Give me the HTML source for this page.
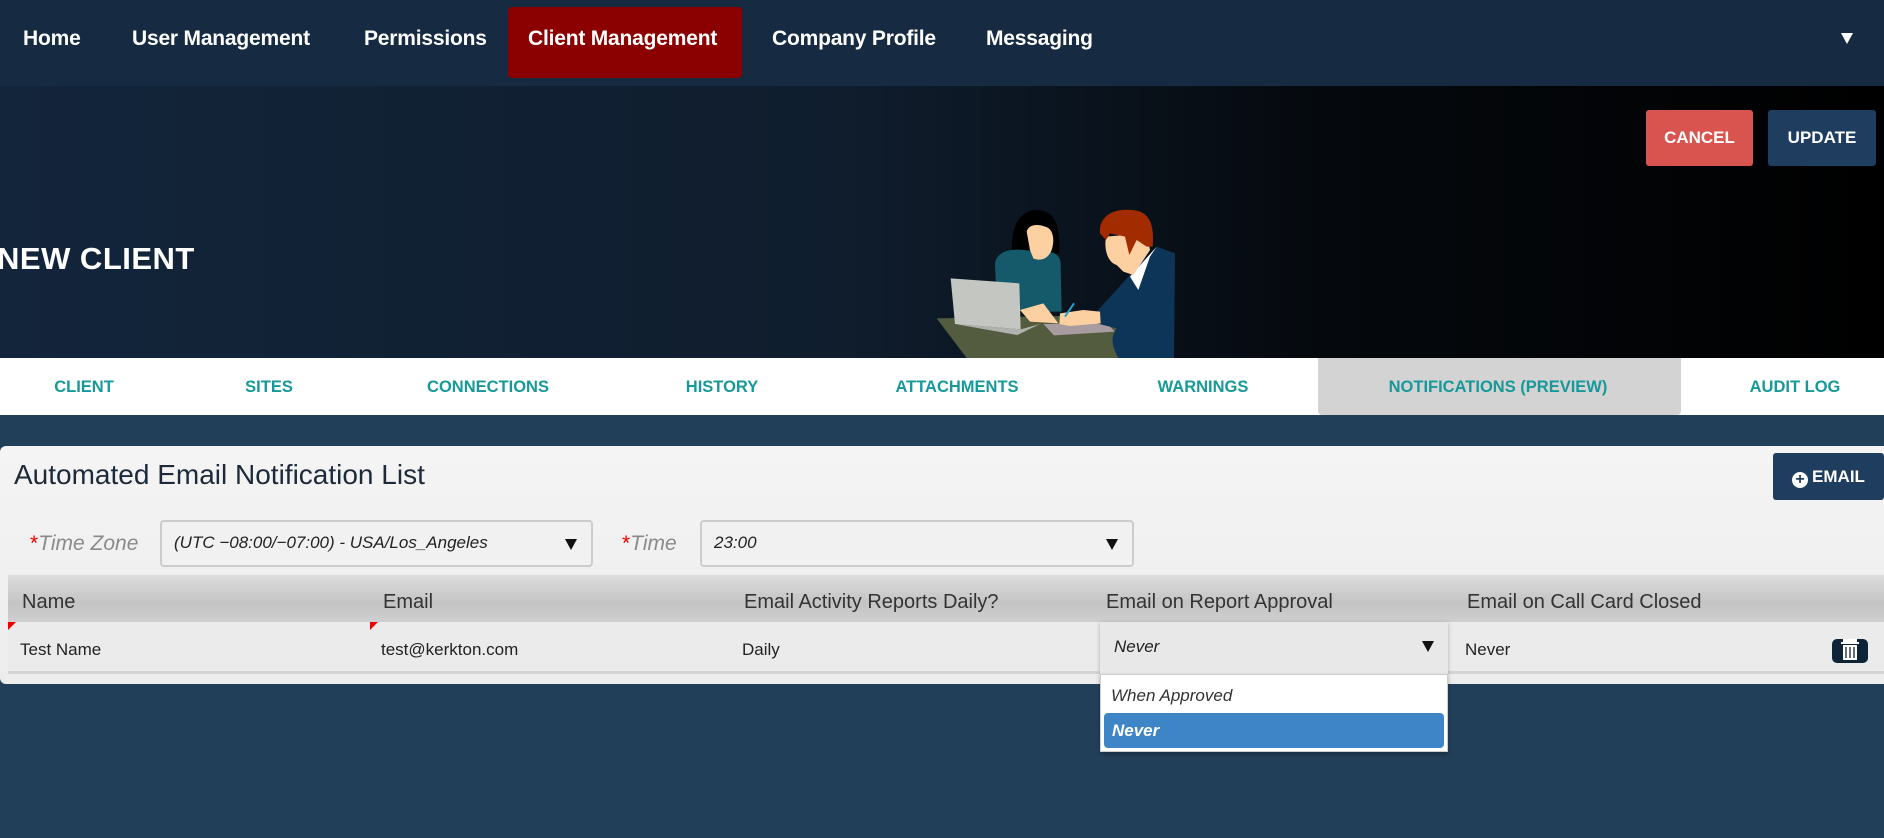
<!DOCTYPE html>
<html><head><meta charset="utf-8">
<style>
*{box-sizing:border-box;margin:0;padding:0}
body{width:1884px;height:838px;overflow:hidden;background:#223f59;font-family:"Liberation Sans",sans-serif;position:relative}
.abs{position:absolute}
.nav{left:0;top:0;width:1884px;height:86px;background:#162a42}
.nav span{position:absolute;top:27px;color:#fff;font-weight:bold;font-size:21px;letter-spacing:-0.2px}
.hero{left:0;top:86px;width:1884px;height:272px;background:linear-gradient(90deg,#13253b 0%,#0f1d2d 45%,#05090e 70%,#000 100%)}
.btn{color:#fff;font-weight:bold;font-size:17px;text-align:center;border-radius:3px}
.tabs{left:0;top:358px;width:1884px;height:57px;background:#fff}
.tabs span{position:absolute;top:20px;color:#17989a;font-weight:bold;font-size:16.5px;transform:translateX(-50%);white-space:nowrap}
.panel{left:0;top:446px;width:1884px;height:238px;background:linear-gradient(180deg,#f4f4f4,#ededed);border-radius:6px 0 0 6px}
.lbl{color:#8a8a8a;font-style:italic;font-size:21px}
.req{color:#e00;font-style:normal}
.sel{border:2px solid #ccc;border-radius:4px;background:#f1f1f1;font-style:italic;font-size:17px;color:#222;padding:11px 12px}
.tri{position:absolute;right:14px;top:17px;width:0;height:0;border-left:6px solid transparent;border-right:6px solid transparent;border-top:11px solid #111}
.th{top:575px;height:47px;background:linear-gradient(180deg,#dcdcdc,#c4c4c4 60%,#cfcfcf);left:8px;width:1876px}
.th span{position:absolute;top:16px;font-size:20px;color:#333}
.row{top:622px;height:52px;left:8px;width:1876px;background:#ebebeb;border-bottom:3px solid #d4d4d4}
.row span{position:absolute;top:18px;font-size:17px;color:#222}
</style></head><body>
<div class="abs nav">
<span style="left:23px">Home</span>
<span style="left:132px">User Management</span>
<span style="left:364px">Permissions</span>
<div class="abs" style="left:508px;top:7px;width:234px;height:71px;background:#8b0000;border-radius:4px"></div>
<span style="left:528px">Client Management</span>
<span style="left:772px">Company Profile</span>
<span style="left:986px">Messaging</span>
<div class="abs" style="left:1841px;top:33px;width:0;height:0;border-left:6px solid transparent;border-right:6px solid transparent;border-top:11px solid #fff"></div>
</div>
<div class="abs hero">
<div class="abs" style="left:-3px;top:155px;color:#fff;font-size:31px;font-weight:bold;letter-spacing:0.5px">NEW CLIENT</div>
<div class="abs btn" style="left:1646px;top:24px;width:107px;height:56px;line-height:56px;background:#d9534f">CANCEL</div>
<div class="abs btn" style="left:1768px;top:24px;width:108px;height:56px;line-height:56px;background:#1f3d5f">UPDATE</div>
</div>
<svg class="abs" style="left:930px;top:200px" width="260" height="158" viewBox="0 0 780 474">
<polygon points="20,355 560,345 600,474 110,474" fill="#545c40"/>
<path d="M245,150 C245,60 280,30 320,30 C370,30 392,70 388,160 L300,170 Z" fill="#000"/>
<path d="M195,190 C200,160 230,145 280,150 L330,155 C370,150 395,165 392,200 L395,335 L280,335 L200,300 Z" fill="#155a6a"/>
<path d="M290,95 C295,75 320,70 345,80 C370,85 375,120 365,150 C355,175 335,185 310,175 L300,150 Z" fill="#fcd0a0"/>
<polygon points="62,235 268,250 272,388 75,372" fill="#c4c6c2"/>
<polygon points="75,372 272,388 330,372 262,405" fill="#b0b2ae"/>
<polygon points="340,372 530,370 555,395 372,406" fill="#a89ca0"/>
<path d="M270,330 L340,310 L385,370 L300,365 Z" fill="#fcd0a0"/>
<path d="M600,225 L680,140 L735,160 L732,474 L565,474 C540,430 545,405 560,385 L500,370 L500,335 Z" fill="#0d3558"/>
<path d="M600,230 L680,140 L660,170 L625,270 Z" fill="#fff"/>
<path d="M528,110 C520,160 540,190 560,195 L580,215 L610,225 L660,150 L650,100 Z" fill="#fcd0a0"/>
<path d="M510,100 C505,50 550,25 600,30 C650,30 675,60 668,140 L650,140 L620,120 L598,165 L585,110 L540,100 L528,120 Z" fill="#a32b00"/>
<path d="M390,340 L460,330 L510,335 L512,370 L420,378 L388,372 Z" fill="#fcd0a0"/>
<line x1="405" y1="350" x2="432" y2="310" stroke="#2aa0d0" stroke-width="6"/>
</svg>
<div class="abs tabs">
<div class="abs" style="left:1318px;top:0;width:363px;height:57px;background:#d3d3d3;border-radius:0 0 4px 4px"></div>
<span style="left:84px">CLIENT</span>
<span style="left:269px">SITES</span>
<span style="left:488px">CONNECTIONS</span>
<span style="left:722px">HISTORY</span>
<span style="left:957px">ATTACHMENTS</span>
<span style="left:1203px">WARNINGS</span>
<span style="left:1498px">NOTIFICATIONS (PREVIEW)</span>
<span style="left:1795px">AUDIT LOG</span>
</div>
<div class="abs panel"></div>
<div class="abs" style="left:14px;top:459px;font-size:28px;color:#1c2a3a">Automated Email Notification List</div>
<div class="abs btn" style="left:1773px;top:453px;width:111px;height:47px;line-height:47px;background:#1f3d5f;font-size:17px"><span style="display:inline-block;width:16px;height:16px;border-radius:50%;background:#fff;color:#1f3d5f;font-size:16px;line-height:16px;vertical-align:-2px;margin-right:4px">+</span>EMAIL</div>
<div class="abs lbl" style="left:30px;top:532px"><span class="req">*</span>Time Zone</div>
<div class="abs sel" style="left:160px;top:520px;width:433px;height:47px">(UTC −08:00/−07:00) - USA/Los_Angeles<div class="tri"></div></div>
<div class="abs lbl" style="left:622px;top:532px"><span class="req">*</span>Time</div>
<div class="abs sel" style="left:700px;top:520px;width:434px;height:47px">23:00<div class="tri"></div></div>
<div class="abs th">
<span style="left:14px">Name</span><span style="left:375px">Email</span><span style="left:736px">Email Activity Reports Daily?</span><span style="left:1098px">Email on Report Approval</span><span style="left:1459px">Email on Call Card Closed</span>
</div>
<div class="abs row">
<div class="abs" style="left:0;top:0;border-top:8px solid #e00;border-right:8px solid transparent"></div>
<div class="abs" style="left:362px;top:0;border-top:8px solid #e00;border-right:8px solid transparent"></div>
<span style="left:12px">Test Name</span><span style="left:373px">test@kerkton.com</span><span style="left:734px">Daily</span><span style="left:1457px">Never</span>
<div class="abs" style="left:1092px;top:0;width:348px;height:52px;background:#e8e8e8;box-shadow:0 1px 4px rgba(0,0,0,.25)"><span style="left:14px;top:15px;font-style:italic">Never</span><div class="tri" style="top:19px"></div></div>
<svg class="abs" style="left:1824px;top:15px" width="36" height="26" viewBox="0 0 36 26"><rect x="0" y="2" width="36" height="24" rx="5" fill="#0d2438"/><rect x="11" y="2" width="14" height="3" fill="#fff"/><rect x="9" y="5" width="18" height="2" fill="#fff"/><rect x="11" y="8" width="14" height="15" fill="#fff"/><g stroke="#0d2438" stroke-width="1.3"><line x1="14" y1="10" x2="14" y2="21"/><line x1="18" y1="10" x2="18" y2="21"/><line x1="22" y1="10" x2="22" y2="21"/></g></svg>
</div>
<div class="abs" style="left:1100px;top:674px;width:348px;height:78px;background:#fff;border:1px solid #ccc;box-shadow:0 2px 4px rgba(0,0,0,.3)">
<div class="abs" style="left:10px;top:11px;font-style:italic;font-size:17px;color:#333">When Approved</div>
<div class="abs" style="left:3px;top:38px;width:340px;height:35px;background:#3d85c6;border-radius:4px;color:#fff;font-style:italic;font-weight:bold;font-size:17px;padding:8px 8px">Never</div>
</div>
</body></html>
